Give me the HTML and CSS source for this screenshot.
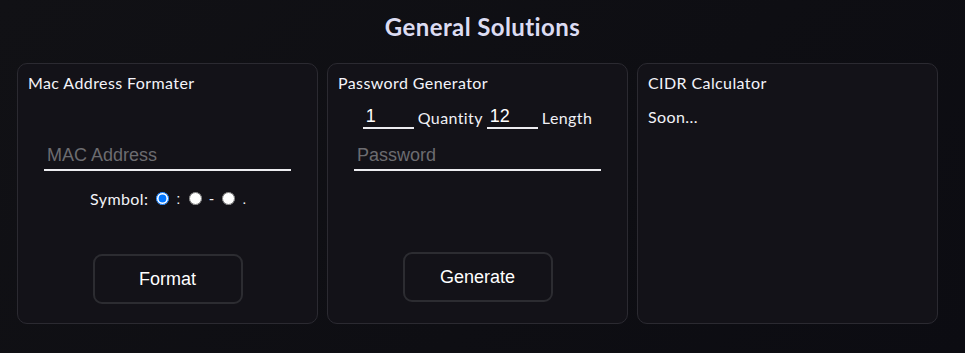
FILE: index.html
```html
<!DOCTYPE html>
<html lang="en">
<head>
  <meta charset="UTF-8">
  <title>General Solutions</title>
  <link rel="stylesheet" href="styles.css">
</head>
<body>

<h1 class="page-title">General Solutions</h1>

<div class="tools">
  <div class="card">
    <div class="card-title">Mac Address Formater</div>
    <input class="field mac-field" type="text" placeholder="MAC Address">
    <div class="symbol-row">
      <span>Symbol:</span>
      <input type="radio" name="symbol" checked> <span class="sym">:</span>
      <input type="radio" name="symbol"> <span class="sym">-</span>
      <input type="radio" name="symbol"> <span class="sym">.</span>
    </div>
    <button class="action">Format</button>
  </div>

  <div class="card">
    <div class="card-title">Password Generator</div>
    <div class="number-row">
      <input class="field num" type="text" value="1">
      <span class="num-label">Quantity</span>
      <input class="field num" type="text" value="12">
      <span class="num-label">Length</span>
    </div>
    <input class="field pass-field" type="text" placeholder="Password">
    <button class="action gen">Generate</button>
  </div>

  <div class="card">
    <div class="card-title">CIDR Calculator</div>
    <div class="soon">Soon...</div>
  </div>
</div>

</body>
</html>
```

FILE: styles.css
```css
body {
  margin: 0;
  height: 353px;
  font-family: Lato, "Open Sans", sans-serif;
  letter-spacing: 0.4px;
  color: #f2f2f7;
  background: linear-gradient(135deg, #111115 0%, #0e0e13 60%, #0c0c12 100%);
  overflow: hidden;
}

.page-title {
  margin: 0;
  padding-top: 12px;
  height: 63px;
  box-sizing: border-box;
  text-align: center;
  font-size: 24px;
  font-weight: bold;
  color: #dcdcf2;
  letter-spacing: 0.4px;
}

.tools {
  display: flex;
  gap: 9px;
  padding-left: 17px;
}

.card {
  width: 301px;
  height: 261px;
  box-sizing: border-box;
  border: 1px solid #2b2a31;
  border-radius: 10px;
  background-color: #131218;
  padding: 9px 10px;
  display: flex;
  flex-direction: column;
}

.card-title {
  font-size: 16px;
  line-height: 20px;
  color: #f4f4fa;
}

.field {
  background: transparent;
  border: none;
  border-bottom: 2px solid #ececf0;
  outline: none;
  color: #ffffff;
  font-family: "Liberation Sans", Arial, sans-serif;
  font-size: 18px;
  letter-spacing: 0;
  padding: 0 3px;
  box-sizing: border-box;
}

.field::placeholder {
  color: #6c6c70;
}

.mac-field,
.pass-field {
  width: 247px;
  height: 30px;
  align-self: center;
}

.mac-field {
  margin-top: 48px;
}

.symbol-row {
  margin-top: 17px;
  height: 20px;
  display: flex;
  align-items: center;
  justify-content: center;
  font-size: 16px;
  padding-left: 2px;
}

.symbol-row input {
  width: 13px;
  height: 13px;
  margin: 0 7px 0 8px;
}

.sym {
  font-family: "Liberation Sans", Arial, sans-serif;
  font-size: 15px;
}

.action {
  align-self: center;
  width: 150px;
  height: 50px;
  margin-top: 46px;
  background: transparent;
  border: 2px solid #2c2c31;
  border-radius: 9px;
  color: #ffffff;
  font-family: "Liberation Sans", Arial, sans-serif;
  font-size: 18px;
}

.gen {
  margin-top: 81px;
}

.number-row {
  margin-top: 12px;
  display: flex;
  align-items: center;
  justify-content: center;
  gap: 4px;
}

.num {
  width: 51px;
  height: 24px;
}

.num-label {
  font-size: 16px;
  color: #f0f0f5;
}

.pass-field {
  margin-top: 12px;
}

.soon {
  margin-top: 14px;
  font-size: 16px;
  line-height: 20px;
}
```
